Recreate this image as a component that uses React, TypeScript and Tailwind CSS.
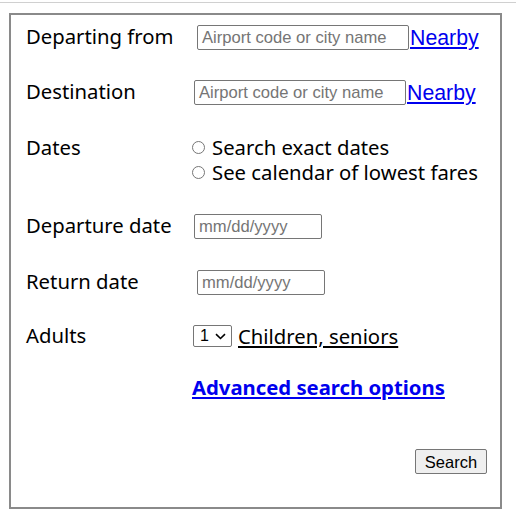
import React from "react";

const label = "text-[20.3px] text-black";
const seg = { fontFamily: '"Noto Sans", "Open Sans", sans-serif' };
const arial = { fontFamily: '"Liberation Sans", Arial, sans-serif' };

function Radio({ text }: { text: string }) {
  return (
    <div className="flex h-[25px] items-center">
      <span className="mr-[7px] box-border h-[13px] w-[13px] rounded-full border border-[#767676] bg-white" />
      <span className={`leading-[25px] ${label}`} style={seg}>{text}</span>
    </div>
  );
}

function TextBox({ ph, w }: { ph: string; w: string }) {
  return (
    <div
      className={`box-border flex h-[25px] items-center rounded-[2px] border border-[#767676] bg-white pl-[4px] pt-[1px] text-[16.6px] leading-[20px] text-[#757575] ${w}`}
      style={arial}
    >
      {ph}
    </div>
  );
}

export default function App() {
  return (
    <div className="h-[520px] w-[516px] bg-white">
      <div className="h-[2px]" />
      <div className="h-px w-full bg-[#d0d0d0]" />
      <div className="h-[10px]" />
      <div className="ml-[9px] box-border flex h-[496px] w-[493px] flex-col border-2 border-[#8a8a8a] pl-[15px]">
        <div className="flex h-[45px] items-center">
          <div className={`-mt-[2px] w-[166px] ${label}`} style={seg}>Departing from</div>
          <div className="ml-[5px] flex items-end">
            <TextBox ph="Airport code or city name" w="w-[212px]" />
            <a className="ml-[1px] text-[21.3px] leading-[24px] text-[#0000ee] underline" style={arial} href="#">Nearby</a>
          </div>
        </div>
        <div className="flex h-[65px] items-center">
          <div className={`-mt-[2px] w-[166px] ${label}`} style={seg}>Destination</div>
          <div className="ml-[2px] flex items-end">
            <TextBox ph="Airport code or city name" w="w-[212px]" />
            <a className="ml-[1px] text-[21.3px] leading-[24px] text-[#0000ee] underline" style={arial} href="#">Nearby</a>
          </div>
        </div>
        <div className="flex h-[60px] items-start pt-[10px]">
          <div className={`flex h-[25px] w-[166px] items-center ${label}`} style={seg}>Dates</div>
          <div className="flex flex-col">
            <Radio text="Search exact dates" />
            <Radio text="See calendar of lowest fares" />
          </div>
        </div>
        <div className="flex h-[82px] items-center">
          <div className={`-mt-[2px] w-[166px] ${label}`} style={seg}>Departure date</div>
          <div className="ml-[2px]">
            <TextBox ph="mm/dd/yyyy" w="w-[128px]" />
          </div>
        </div>
        <div className="flex h-[30px] items-center">
          <div className={`-mt-[2px] w-[166px] ${label}`} style={seg}>Return date</div>
          <div className="ml-[5px]">
            <TextBox ph="mm/dd/yyyy" w="w-[128px]" />
          </div>
        </div>
        <div className="flex h-[78px] items-center">
          <div className={`-mt-[2px] w-[166px] ${label}`} style={seg}>Adults</div>
          <div className="ml-[1px] flex items-center">
            <div
              className="box-border flex h-[22px] w-[39px] items-center rounded-[2px] border border-[#767676] bg-white pl-[6px] text-[16px] text-black"
              style={arial}
            >
              1
              <svg className="ml-[6px]" width="11" height="7" viewBox="0 0 11 7">
                <path d="M1 1.2 L5.5 5.5 L10 1.2" fill="none" stroke="#000" strokeWidth="1.6" />
              </svg>
            </div>
            <a className={`ml-[6px] underline ${label}`} style={seg} href="#">Children, seniors</a>
          </div>
        </div>
        <div className="flex h-[24px] items-center">
          <div className="w-[166px]" />
          <a className="text-[20.3px] font-bold text-[#0000ee] underline" style={seg} href="#">Advanced search options</a>
        </div>
        <div className="flex justify-end pr-[13px] pt-[50px]">
          <button
            className="box-border h-[25px] w-[72px] rounded-[2px] border border-[#767676] bg-[#efefef] text-[16.5px] text-black"
            style={arial}
          >
            Search
          </button>
        </div>
      </div>
    </div>
  );
}
